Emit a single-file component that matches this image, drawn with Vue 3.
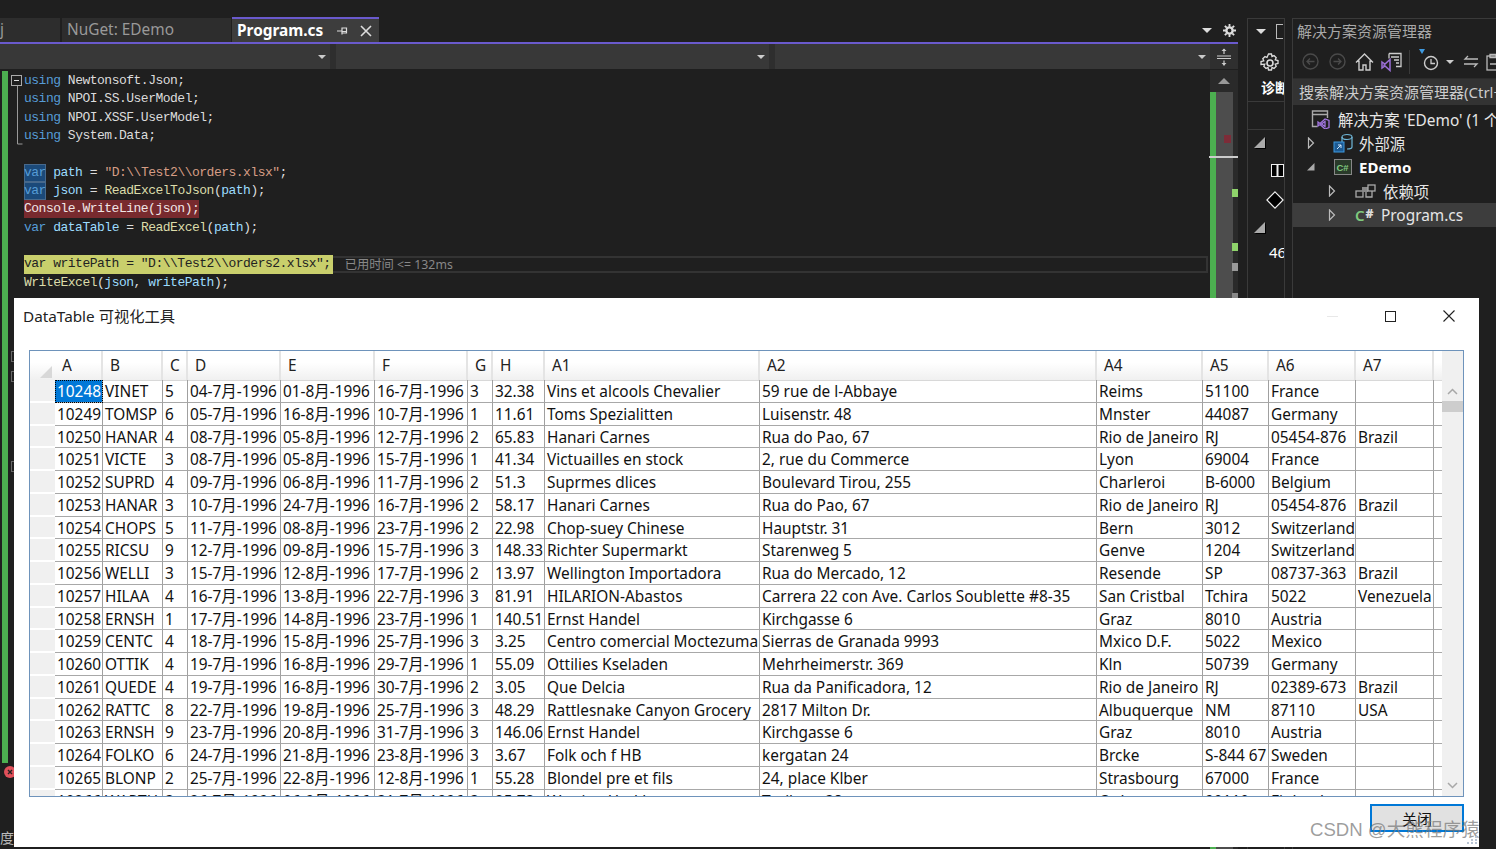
<script setup>
const headers = ['A','B','C','D','E','F','G','H','A1','A2','A4','A5','A6','A7']
const rows = [
['10248','VINET','5','04-7月-1996','01-8月-1996','16-7月-1996','3','32.38','Vins et alcools Chevalier','59 rue de l-Abbaye','Reims','51100','France',''],
['10249','TOMSP','6','05-7月-1996','16-8月-1996','10-7月-1996','1','11.61','Toms Spezialitten','Luisenstr. 48','Mnster','44087','Germany',''],
['10250','HANAR','4','08-7月-1996','05-8月-1996','12-7月-1996','2','65.83','Hanari Carnes','Rua do Pao, 67','Rio de Janeiro','RJ','05454-876','Brazil'],
['10251','VICTE','3','08-7月-1996','05-8月-1996','15-7月-1996','1','41.34','Victuailles en stock','2, rue du Commerce','Lyon','69004','France',''],
['10252','SUPRD','4','09-7月-1996','06-8月-1996','11-7月-1996','2','51.3','Suprmes dlices','Boulevard Tirou, 255','Charleroi','B-6000','Belgium',''],
['10253','HANAR','3','10-7月-1996','24-7月-1996','16-7月-1996','2','58.17','Hanari Carnes','Rua do Pao, 67','Rio de Janeiro','RJ','05454-876','Brazil'],
['10254','CHOPS','5','11-7月-1996','08-8月-1996','23-7月-1996','2','22.98','Chop-suey Chinese','Hauptstr. 31','Bern','3012','Switzerland',''],
['10255','RICSU','9','12-7月-1996','09-8月-1996','15-7月-1996','3','148.33','Richter Supermarkt','Starenweg 5','Genve','1204','Switzerland',''],
['10256','WELLI','3','15-7月-1996','12-8月-1996','17-7月-1996','2','13.97','Wellington Importadora','Rua do Mercado, 12','Resende','SP','08737-363','Brazil'],
['10257','HILAA','4','16-7月-1996','13-8月-1996','22-7月-1996','3','81.91','HILARION-Abastos','Carrera 22 con Ave. Carlos Soublette #8-35','San Cristbal','Tchira','5022','Venezuela'],
['10258','ERNSH','1','17-7月-1996','14-8月-1996','23-7月-1996','1','140.51','Ernst Handel','Kirchgasse 6','Graz','8010','Austria',''],
['10259','CENTC','4','18-7月-1996','15-8月-1996','25-7月-1996','3','3.25','Centro comercial Moctezuma','Sierras de Granada 9993','Mxico D.F.','5022','Mexico',''],
['10260','OTTIK','4','19-7月-1996','16-8月-1996','29-7月-1996','1','55.09','Ottilies Kseladen','Mehrheimerstr. 369','Kln','50739','Germany',''],
['10261','QUEDE','4','19-7月-1996','16-8月-1996','30-7月-1996','2','3.05','Que Delcia','Rua da Panificadora, 12','Rio de Janeiro','RJ','02389-673','Brazil'],
['10262','RATTC','8','22-7月-1996','19-8月-1996','25-7月-1996','3','48.29','Rattlesnake Canyon Grocery','2817 Milton Dr.','Albuquerque','NM','87110','USA'],
['10263','ERNSH','9','23-7月-1996','20-8月-1996','31-7月-1996','3','146.06','Ernst Handel','Kirchgasse 6','Graz','8010','Austria',''],
['10264','FOLKO','6','24-7月-1996','21-8月-1996','23-8月-1996','3','3.67','Folk och f HB','kergatan 24','Brcke','S-844 67','Sweden',''],
['10265','BLONP','2','25-7月-1996','22-8月-1996','12-8月-1996','1','55.28','Blondel pre et fils','24, place Klber','Strasbourg','67000','France',''],
['10266','WARTH','3','26-7月-1996','06-9月-1996','31-7月-1996','3','25.73','Wartian Herkku','Torikatu 38','Oulu','90110','Finland','']
]
</script>

<template>
  <div class="ide">
    <section class="editor">
      <div class="tabs">
        <div class="tab stub">j</div>
        <div class="tab nuget">NuGet: EDemo</div>
        <div class="tab active">
          <span>Program.cs</span>
          <svg class="pin" width="12" height="12" viewBox="0 0 12 12"><path d="M1 6h5M6 2.500v7M6 3h4.500v5H6M6 6.500h4" fill="none" stroke="#ddd" stroke-width="1.200"/></svg>
          <svg class="close" width="12" height="12" viewBox="0 0 12 12"><path d="M1 1l10 10M11 1L1 11" stroke="#ddd" stroke-width="1.600"/></svg>
        </div>
        <div class="tabtools">
          <i class="caret"></i>
          <svg width="13" height="13" viewBox="0 0 14 14"><circle cx="7" cy="7" r="3.400" fill="none" stroke="#ddd" stroke-width="2.600"/><path d="M7 0v3M7 11v3M0 7h3M11 7h3M2 2l2 2M10 10l2 2M12 2l-2 2M4 10l-2 2" stroke="#ddd" stroke-width="2"/></svg>
        </div>
      </div>
      <div class="combos">
        <div class="combo c1"><i class="caret small"></i></div>
        <div class="combo c2"><i class="caret small"></i></div>
        <div class="combo c3"><i class="caret small"></i></div>
        <div class="split">
          <svg width="16" height="18" viewBox="0 0 16 18"><path d="M1 8h14M1 10.500h14M8 1v5M8 12.500v5" stroke="#ccc" stroke-width="1.200"/><path d="M5.500 3L8 .5 10.500 3zM5.500 15L8 17.500 10.500 15z" fill="#ccc"/></svg>
        </div>
      </div>
      <div class="body">
        <svg class="gutter" width="24" height="779" viewBox="0 0 24 779">
          <rect x="2" y="1" width="6" height="692" fill="#4caf50"/>
          <rect x="11.500" y="5.500" width="10" height="10" fill="none" stroke="#aaa"/>
          <path d="M14 10.500h5" stroke="#ddd"/>
          <path d="M17.500 16v58h5" fill="none" stroke="#999"/>
          <rect x="11.500" y="281.500" width="3" height="10" fill="none" stroke="#666"/>
          <rect x="11.500" y="301.500" width="3" height="10" fill="none" stroke="#666"/>
          <rect x="11.500" y="391.500" width="3" height="10" fill="none" stroke="#666"/>
          <circle cx="10" cy="702" r="6" fill="#e0505a"/>
          <path d="M8 700l4 4M12 700l-4 4" stroke="#222" stroke-width="1.400"/>
          <text x="0" y="773" fill="#bbb" font-size="14" font-family="'Noto Sans CJK SC', sans-serif">度</text>
        </svg>
        <div class="code">
          <div class="ln"><span class="kw">using</span> <span class="nm">Newtonsoft.Json;</span></div>
          <div class="ln"><span class="kw">using</span> <span class="nm">NPOI.SS.UserModel;</span></div>
          <div class="ln"><span class="kw">using</span> <span class="nm">NPOI.XSSF.UserModel;</span></div>
          <div class="ln"><span class="kw">using</span> <span class="nm">System.Data;</span></div>
          <div class="ln"></div>
          <div class="ln"><span class="kw varbox">var</span> <span class="lc">path</span> <span class="nm">=</span> <span class="st">"D:\\Test2\\orders.xlsx"</span><span class="nm">;</span></div>
          <div class="ln"><span class="kw varbox">var</span> <span class="lc">json</span> <span class="nm">=</span> <span class="fn">ReadExcelToJson</span><span class="nm">(</span><span class="lc">path</span><span class="nm">);</span></div>
          <div class="ln"><span class="redline">Console.WriteLine(json);</span></div>
          <div class="ln"><span class="kw">var</span> <span class="lc">dataTable</span> <span class="nm">=</span> <span class="fn">ReadExcel</span><span class="nm">(</span><span class="lc">path</span><span class="nm">);</span></div>
          <div class="ln"></div>
          <div class="ln current"><span class="yellow">var writePath = "D:\\Test2\\orders2.xlsx";</span><span class="elapsed">已用时间 &lt;= 132ms</span></div>
          <div class="ln"><span class="fn">WriteExcel</span><span class="nm">(</span><span class="lc">json</span><span class="nm">,</span> <span class="lc">writePath</span><span class="nm">);</span></div>
        </div>
        <div class="vscroll">
          <div class="uparrow"><i></i></div>
          <div class="track">
            <i class="greenbar"></i>
            <i class="mark red"></i>
            <i class="mark caretline"></i>
            <i class="mark g1"></i>
            <i class="mark g2"></i>
            <i class="mark g3"></i>
            <i class="mark g4"></i>
          </div>
        </div>
      </div>
    </section>

    <aside class="diag">
      <div class="d-top"><i class="caret white"></i><span class="clip"></span></div>
      <div class="d-gear">
        <svg width="20" height="20" viewBox="0 0 20 20"><path d="M8.500 1h3l.5 2.500 2-.9 2.200 2.100-1 2.100 2.800.7v3l-2.800.7 1 2.100-2.200 2.100-2-.9-.5 2.500h-3l-.5-2.500-2 .9-2.200-2.100 1-2.100L1 11.500v-3l2.800-.7-1-2.100L5 3.600l2 .9z" fill="none" stroke="#ddd" stroke-width="1.300"/><circle cx="10" cy="10" r="3" fill="none" stroke="#ddd" stroke-width="1.600"/></svg>
      </div>
      <div class="d-label">诊断</div>
      <div class="d-blank"></div>
      <div class="d-row h25"><i class="corner"></i></div>
      <div class="d-row h31 end">
        <svg width="13" height="13" viewBox="0 0 13 13"><rect x=".5" y=".5" width="12" height="12" fill="#000" stroke="#eee"/><path d="M6.500 0v13" stroke="#eee" stroke-width="2"/></svg>
      </div>
      <div class="d-row h28 end2">
        <svg width="20" height="20" viewBox="0 0 20 20"><path d="M10 1l9 9-9 9-9-9z" fill="#000" stroke="#eee" stroke-width="1.300"/></svg>
      </div>
      <div class="d-row h26"><i class="corner"></i></div>
      <div class="d-num">46</div>
    </aside>

    <aside class="sol">
      <div class="s-title">解决方案资源管理器</div>
      <div class="s-tools">
        <svg width="17" height="17" viewBox="0 0 17 17"><circle cx="8.500" cy="8.500" r="7.500" fill="none" stroke="#4a4a4a" stroke-width="1.400"/><path d="M12.500 8.500h-7M8 5.500l-3 3 3 3" fill="none" stroke="#4a4a4a" stroke-width="1.300"/></svg>
        <svg class="t2" width="17" height="17" viewBox="0 0 17 17"><circle cx="8.500" cy="8.500" r="7.500" fill="none" stroke="#4a4a4a" stroke-width="1.400"/><path d="M4.500 8.500h7M9 5.500l3 3-3 3" fill="none" stroke="#4a4a4a" stroke-width="1.300"/></svg>
        <svg class="t3" width="19" height="18" viewBox="0 0 19 18"><path d="M1 9.500L9.500 1 18 9.500M4 7.500V17h4v-5h3v5h4V7.500" fill="none" stroke="#ccc" stroke-width="1.400"/></svg>
        <svg class="t4" width="21" height="20" viewBox="0 0 21 20"><path d="M8 1.500h12v13h-5M8 1.500v5M10 5h8M13 8h5M15 11h3" fill="none" stroke="#ccc" stroke-width="1.300"/><path d="M1 10l3 2 5-4.500v11L4 14l-3 2zM3 12.500v1.500" fill="none" stroke="#9b6fd6" stroke-width="1.500"/></svg>
        <i class="t-sep"></i>
        <svg class="t5" width="22" height="24" viewBox="0 0 22 24"><path d="M0 0h6L3 5z" fill="#3f9ae0"/><circle cx="12" cy="14" r="6.500" fill="none" stroke="#ccc" stroke-width="1.400"/><path d="M12 10v4.500h4" fill="none" stroke="#ccc" stroke-width="1.300"/></svg>
        <i class="caret tiny"></i>
        <svg class="t6" width="16" height="13" viewBox="0 0 16 13"><path d="M15 4H2l3-3M1 9h13l-3 3" fill="none" stroke="#bbb" stroke-width="1.300"/></svg>
        <svg class="t7" width="14" height="18" viewBox="0 0 14 18"><rect x="1" y="3" width="12" height="14" fill="none" stroke="#bbb" stroke-width="1.300"/><path d="M4 1.500h6v3H4zM4 11h6" fill="none" stroke="#bbb" stroke-width="1.300"/></svg>
      </div>
      <div class="s-search">搜索解决方案资源管理器(Ctrl+;)</div>
      <div class="tree">
        <div class="node l0">
          <svg class="ico" width="20" height="20" viewBox="0 0 20 20"><path d="M1.500 15V2h15v7M1.500 15v2.500h5M1.500 5.500h15" fill="none" stroke="#aaa" stroke-width="1.400"/><path d="M7 13l2 1.500 5-4.500 4 1.500v7L14 20l-5-4.500L7 17zM14 12.500v5L10.500 15z" fill="none" stroke="#a276e0" stroke-width="1.300"/></svg>
          <span>解决方案 'EDemo' (1 个项目)</span>
        </div>
        <div class="node l1">
          <svg class="exp" width="8" height="12" viewBox="0 0 8 12"><path d="M1.500 1l5 5-5 5z" fill="none" stroke="#bbb" stroke-width="1.200"/></svg>
          <svg class="ico" width="20" height="20" viewBox="0 0 20 20"><ellipse cx="14" cy="4" rx="5" ry="2.500" fill="none" stroke="#6fb7d8" stroke-width="1.200"/><path d="M9 4v5M19 4v10c0 1-2 2-5 2" fill="none" stroke="#6fb7d8" stroke-width="1.200"/><rect x="1" y="9" width="10" height="10" fill="#1d5a92" stroke="#3f9ae0"/><path d="M4 16l4-4M5 12h3v3" fill="none" stroke="#cfe6fa"/></svg>
          <span>外部源</span>
        </div>
        <div class="node l1 nudge">
          <svg class="exp" width="8" height="12" viewBox="0 0 8 12"><path d="M0 9.500L7.500 2v7.500z" fill="#aaa"/></svg>
          <svg class="ico" width="18" height="16" viewBox="0 0 18 16"><rect x=".5" y=".5" width="17" height="15" fill="#2a3a2a" stroke="#888"/><text x="2.500" y="11.500" font-size="9.500" font-weight="700" fill="#7fc97f" font-family="'Liberation Sans', sans-serif">C#</text></svg>
          <strong>EDemo</strong>
        </div>
        <div class="node l2">
          <svg class="exp" width="8" height="12" viewBox="0 0 8 12"><path d="M1.500 1l5 5-5 5z" fill="none" stroke="#bbb" stroke-width="1.200"/></svg>
          <svg class="ico" width="21" height="14" viewBox="0 0 21 14"><rect x="1" y="7" width="7" height="6" fill="none" stroke="#aaa" stroke-width="1.300"/><rect x="7" y="3" width="6" height="5" fill="#888"/><rect x="13" y="1" width="7" height="6" fill="none" stroke="#aaa" stroke-width="1.300"/><path d="M11 8v5h6V7" fill="none" stroke="#aaa" stroke-width="1.300"/></svg>
          <span>依赖项</span>
        </div>
        <div class="node l2 sel">
          <svg class="exp" width="8" height="12" viewBox="0 0 8 12"><path d="M1.500 1l5 5-5 5z" fill="none" stroke="#bbb" stroke-width="1.200"/></svg>
          <span class="cs"><em>C</em><b>#</b></span>
          <span>Program.cs</span>
        </div>
      </div>
    </aside>

    <div class="dialog">
      <header class="d-head">
        <span class="d-title">DataTable 可视化工具</span>
        <div class="winbtns">
          <i class="min"></i>
          <i class="max"></i>
          <svg width="12" height="12" viewBox="0 0 12 12"><path d="M.5.500l11 11M11.500.500l-11 11" stroke="#222" stroke-width="1.100"/></svg>
        </div>
      </header>
      <div class="datagrid">
        <div class="gridmain">
          <div class="row head">
            <div class="rh corner-cell"><i></i></div>
            <div v-for="h in headers" :key="h" class="hc">{{ h }}</div>
            <div class="hc last"></div>
          </div>
          <div v-for="(r, ri) in rows" :key="r[0]" class="row">
            <div class="rh"></div>
            <div v-for="(c, ci) in r" :key="ci" class="cell" :class="{ selected: ri === 0 && ci === 0 }"><span>{{ c }}</span></div>
            <div class="cell last"></div>
          </div>
        </div>
        <div class="gridscroll">
          <svg class="sup" width="11" height="7" viewBox="0 0 11 7"><path d="M1 6l4.500-4.500L10 6" fill="none" stroke="#a8a8a8" stroke-width="1.500"/></svg>
          <i class="thumb"></i>
          <svg class="sdown" width="11" height="7" viewBox="0 0 11 7"><path d="M1 1l4.500 4.500L10 1" fill="none" stroke="#a8a8a8" stroke-width="1.500"/></svg>
        </div>
      </div>
      <div class="d-foot"><button class="closebtn">关闭</button></div>
      <div class="wm">CSDN @大熊程序猿</div>
      <svg class="grip" width="14" height="9" viewBox="0 0 14 9"><path d="M11 0h2v2h-2zM7 3h2v2H7zM11 3h2v2h-2zM3 6h2v2H3zM7 6h2v2H7zM11 6h2v2h-2z" fill="#b8c4d4"/></svg>
    </div>
  </div>
</template>

<style>
html, body { margin: 0; background: #1f1f1f; overflow: hidden; }
</style>

<style scoped>
.ide { position: relative; width: 1496px; height: 849px; overflow: hidden; display: flex; background: #1f1f1f; color: #ddd; font-family: "Noto Sans", "Noto Sans CJK SC", sans-serif; font-size: 15.400px; }
i { display: block; }
.caret { width: 0; height: 0; border: 5px solid transparent; border-top: 5px solid #ddd; border-bottom: 0; }
.caret.small { border-width: 4px 4px 0; border-top-color: #ccc; }
.caret.white { border-width: 5px 5px 0; border-top-color: #ddd; }
.caret.tiny { border-width: 4px 4px 0; border-top-color: #ccc; }

.editor { width: 1238px; flex: none; display: flex; flex-direction: column; }
.tabs { height: 24px; margin-top: 18px; display: flex; border-bottom: 2px solid #6a5acd; align-items: stretch; position: relative; }
.tab { background: #2d2d2d; color: #999; line-height: 23px; overflow: hidden; }
.stub { width: 60px; margin-right: 2px; }
.nuget { width: 164px; padding-left: 5px; margin-right: 1px; }
.active { width: 147px; padding-left: 5px; box-sizing: border-box; margin-top: -1px; height: 25px; background: #3d3d3d; border-top: 2px solid #6a5acd; color: #fff; font-weight: 700; display: flex; align-items: center; line-height: 20px; }
.active span { width: 97px; }
.pin { margin-left: 2px; }
.close { margin-left: 12px; }
.tabtools { margin-left: auto; width: 38px; box-sizing: border-box; padding-left: 2px; display: flex; align-items: center; gap: 11px; }
.combos { height: 25px; display: flex; background: #2e2e2e; }
.combo { background: #383838; display: flex; align-items: center; justify-content: flex-end; padding-right: 4px; box-sizing: border-box; }
.c1 { width: 330px; margin-right: 6px; }
.c2 { width: 433px; margin-right: 6px; }
.c3 { width: 435px; }
.split { width: 28px; background: #2f2f2f; display: flex; align-items: center; justify-content: center; }
.body { flex: 1; display: flex; min-height: 0; padding-top: 1px; }
.gutter { flex: none; display: block; }
.code { flex: 1; min-width: 0; padding-top: 2px; font-family: "Liberation Mono", monospace; font-size: 13px; letter-spacing: -0.5px; }
.ln { height: 18.350px; line-height: 18.350px; white-space: pre; color: #dcdcdc; }
.kw { color: #569cd6; }
.nm { color: #dcdcdc; }
.lc { color: #9cdcfe; }
.fn { color: #dcdcaa; }
.st { color: #d69d85; }
.varbox { display: inline-block; height: 18px; line-height: 18px; background: #1b4a7a; box-shadow: inset 0 0 0 1px #47698c; }
.redline { display: inline-block; height: 18px; background: #782a2e; color: #f0e6e6; }
.current { display: flex; margin-right: 2px; }
.yellow { background: #c9cf6c; color: #222; height: 19px; flex: none; padding-right: 2px; }
.elapsed { flex: 1; height: 17px; border: 2px solid #333; border-left: 0; box-sizing: border-box; margin-top: 1px; padding-left: 12px; font-family: "Noto Sans", "Noto Sans CJK SC", sans-serif; font-size: 12.300px; letter-spacing: 0; color: #888; line-height: 13px; }
.vscroll { width: 28px; flex: none; background: #2a2a2a; display: flex; flex-direction: column; }
.uparrow { height: 22px; display: flex; justify-content: center; align-items: center; }
.uparrow i { border: 6px solid transparent; border-top: 0; border-bottom: 6px solid #999; }
.track { flex: 1; position: relative; width: 23px; background: #4d4d4d; }
.greenbar { position: absolute; left: 0; top: 0; bottom: 0; width: 6px; background: #4caf50; }
.mark { position: absolute; }
.red { left: 14px; top: 43px; width: 7px; height: 8px; background: #7d2c38; }
.caretline { left: -1px; top: 64px; width: 29px; height: 2px; background: #ccc; }
.g1 { left: 22px; top: 97px; width: 6px; height: 8px; background: #8fd36b; }
.g2 { left: 22px; top: 151px; width: 6px; height: 8px; background: #8fd36b; }
.g3 { left: 22px; top: 171px; width: 6px; height: 8px; background: #999; }
.g4 { left: 22px; top: 201px; width: 6px; height: 8px; background: #888; }

.diag { width: 36px; margin-left: 9px; margin-top: 18px; flex: none; box-sizing: content-box; border: 1px solid #3a3a3a; border-bottom: 0; overflow: hidden; }
.d-top { height: 25px; display: flex; align-items: center; padding-left: 8px; gap: 10px; }
.clip { width: 6px; height: 13px; border: 1px solid #bbb; border-right: 0; flex: none; }
.d-gear { height: 32px; display: flex; justify-content: center; align-items: center; padding: 6px 0 0 8px; box-sizing: border-box; }
.d-label { height: 25px; border-bottom: 1px solid #3a3a3a; font-weight: 700; color: #fff; font-size: 14px; line-height: 23px; padding-left: 13px; white-space: nowrap; overflow: hidden; }
.d-blank { height: 27px; border-bottom: 1px solid #3a3a3a; }
.d-row { display: flex; align-items: center; }
.h25 { height: 25px; padding-left: 6px; }
.h26 { height: 26px; padding-left: 6px; }
.h31 { height: 31px; }
.h28 { height: 28px; }
.end { padding-left: 23px; }
.end2 { padding-left: 18px; }
.corner { width: 0; height: 0; border-left: 11px solid transparent; border-bottom: 11px solid #aaa; filter: drop-shadow(1px 1px 0 #000); }
.d-num { color: #fff; font-size: 15px; padding-left: 21px; line-height: 24px; white-space: nowrap; }

.sol { flex: 1; margin-left: 7px; margin-top: 18px; border-left: 1px solid #3a3a3a; border-top: 1px solid #3a3a3a; min-width: 0; overflow: hidden; white-space: nowrap; }
.s-title { height: 26px; line-height: 25px; padding-left: 4px; font-size: 15px; color: #a8a8a8; }
.s-tools { height: 33px; display: flex; align-items: center; padding-left: 9px; }
.s-tools svg, .s-tools i { flex: none; }
.t2 { margin-left: 10px; }
.t3 { margin-left: 9px; }
.t4 { margin-left: 7px; }
.t-sep { width: 1px; height: 24px; background: #3a3a3a; margin-left: 7px; }
.t5 { margin-left: 9px; margin-top: -2px; }
.tiny { margin-left: 5px; }
.t6 { margin-left: 9px; }
.t7 { margin-left: 7px; }
.s-search { height: 27px; line-height: 27px; background: #333; padding-left: 6px; color: #ccc; font-size: 15px; border-top: 1px solid #2b2b2b; box-sizing: border-box; overflow: hidden; }
.tree { padding-top: 2px; }
.node { height: 24px; display: flex; align-items: center; color: #e6e6e6; position: relative; }
.node strong { color: #fff; font-size: 15px; }
.exp, .ico { flex: none; }
.l0 { padding-left: 18px; }
.l0 .ico { margin-right: 7px; }
.l1 { padding-left: 14px; }
.l1 .ico { margin: 0 6px 0 18px; }
.nudge .ico { margin: 0 7px 0 19px; }
.l2 { padding-left: 35px; }
.l2 .ico { margin: 0 7px 0 19px; }
.sel { background: #3d3d3d; }
.cs { margin: 0 7px 0 19px; color: #7fc97f; font-size: 15px; font-weight: 600; width: 19px; display: inline-flex; flex: none; }
.cs em { font-style: normal; }
.cs b { color: #dcdcdc; font-size: 12px; margin-left: 1px; }

.dialog { position: absolute; left: 14px; top: 298px; width: 1465px; height: 549px; background: #fff; overflow: hidden; color: #000; }
.d-head { height: 52px; display: flex; align-items: flex-start; }
.d-title { margin: 8px 0 0 9px; font-size: 15.300px; line-height: 20px; color: #222; }
.winbtns { margin-left: auto; display: flex; align-items: center; height: 36px; padding-right: 24px; }
.min { width: 11px; height: 1px; background: #e8e8e8; }
.max { width: 9px; height: 9px; border: 1.500px solid #222; margin: 0 47px; }
.datagrid { margin-left: 15px; width: 1435px; height: 447px; box-sizing: border-box; border: 1px solid #6e93bb; display: flex; overflow: hidden; }
.gridmain { width: 1412px; flex: none; background: #fff; overflow: hidden; }
.row { display: grid; grid-template-columns: 25px 48px 60px 25px 93px 94px 93px 25px 52px 215px 337px 106px 66px 87px 78px 8px; height: 22.760px; }
.row.head { height: 29px; }
.rh { background: #f0f0f0; border-bottom: 2px solid #fff; box-sizing: border-box; position: relative; }
.corner-cell { background: linear-gradient(#fff 40%, #f0f0f0); border-bottom: 1px solid #e0e0e0; }
.corner-cell i { position: absolute; right: 3px; bottom: 2px; width: 0; height: 0; border-left: 12px solid transparent; border-bottom: 12px solid #d8d8d8; }
.hc { background: linear-gradient(#fff 40%, #f0f0f0); border-right: 2px solid #e4e4e4; border-bottom: 1px solid #d8d8d8; box-sizing: border-box; padding-left: 7px; line-height: 29px; font-size: 15.400px; color: #222; }
.hc.last { border-right: 0; padding: 0; }
.cell { border-right: 1px solid #a0a0a0; border-bottom: 1.500px solid #a8a8a8; box-sizing: border-box; padding: 0 0 0 2px; line-height: 23.500px; font-size: 15.400px; white-space: nowrap; overflow: hidden; color: #111; position: relative; }
.cell.last { border-right: 0; padding: 0; }
.cell.selected { background: #0078d7; color: #fff; outline: 1px dotted #000; outline-offset: -1px; }
.gridscroll { flex: 1; background: #f0f0f0; position: relative; }
.sup { position: absolute; left: 5px; top: 37px; }
.thumb { position: absolute; left: 0; right: 0; top: 50px; height: 11px; background: #cdcdcd; }
.sdown { position: absolute; left: 5px; top: 431px; }
.d-foot { display: flex; justify-content: flex-end; padding: 7px 15px 0 0; }
.closebtn { width: 94px; height: 28px; box-sizing: border-box; background: #e1e1e1; border: 2px solid #0078d7; font: 15px "Noto Sans CJK SC", sans-serif; color: #111; padding: 0; }
.wm { position: absolute; left: 1296px; top: 519px; font-family: "Liberation Sans", "Noto Sans CJK SC", sans-serif; font-size: 18.600px; line-height: 26px; white-space: nowrap; color: rgba(120, 120, 120, 0.72); }
.grip { position: absolute; right: 1px; bottom: 2px; }
</style>
